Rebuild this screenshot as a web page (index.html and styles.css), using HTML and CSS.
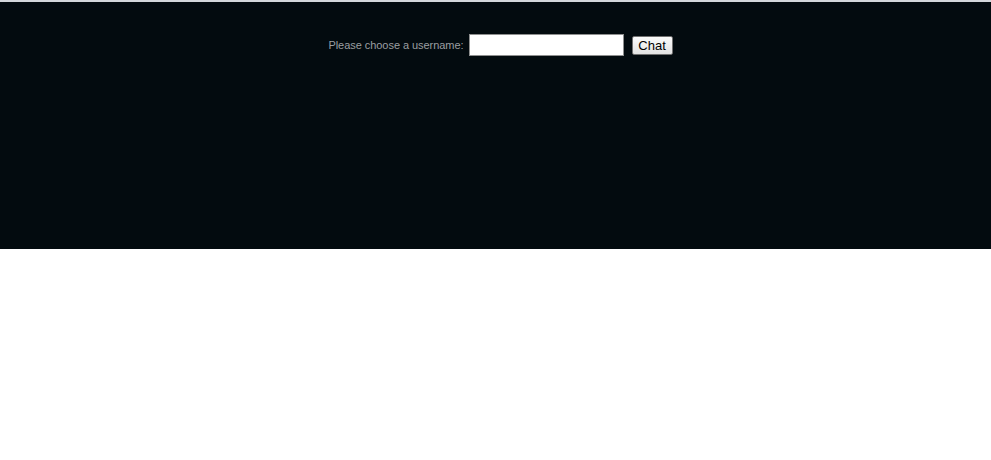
FILE: index.html
```html
<!DOCTYPE html>
<html>
<head>
<meta charset="utf-8">
<link rel="stylesheet" href="styles.css">
</head>
<body>
<div class="topline"></div>
<div class="stage">
  <form class="login">
    <label class="label" for="u">Please choose a username:</label>
    <input class="field" id="u" type="text">
    <button class="btn" type="button">Chat</button>
  </form>
</div>
</body>
</html>
```
FILE: styles.css
```css
html, body {
  margin: 0;
  padding: 0;
  background: #ffffff;
}
.topline {
  height: 2px;
  background: #d3d7db;
}
.stage {
  height: 247px;
  background: #030b0f;
  box-sizing: border-box;
  padding-top: 32px;
}
.login {
  display: flex;
  justify-content: center;
  align-items: center;
  margin: 0;
  padding-left: 10px;
  font-family: "Liberation Sans", Arial, sans-serif;
}
.label {
  font-size: 11px;
  color: #9b9fa1;
  margin-right: 5px;
  letter-spacing: -0.05px;
}
.field {
  width: 155px;
  height: 22px;
  box-sizing: border-box;
  border: 1px solid #8e8f8f;
  background: #fff;
  padding: 0 2px;
  margin: 0 8px 0 0;
}
.btn {
  height: 19px;
  width: 41px;
  box-sizing: border-box;
  padding: 0;
  font-family: "Liberation Sans", Arial, sans-serif;
  font-size: 13px;
  color: #000;
  background: linear-gradient(#fbfbfb, #e3e3e3);
  border: 1px solid #707070;
  border-radius: 2px;
  line-height: 15px;
}
```
